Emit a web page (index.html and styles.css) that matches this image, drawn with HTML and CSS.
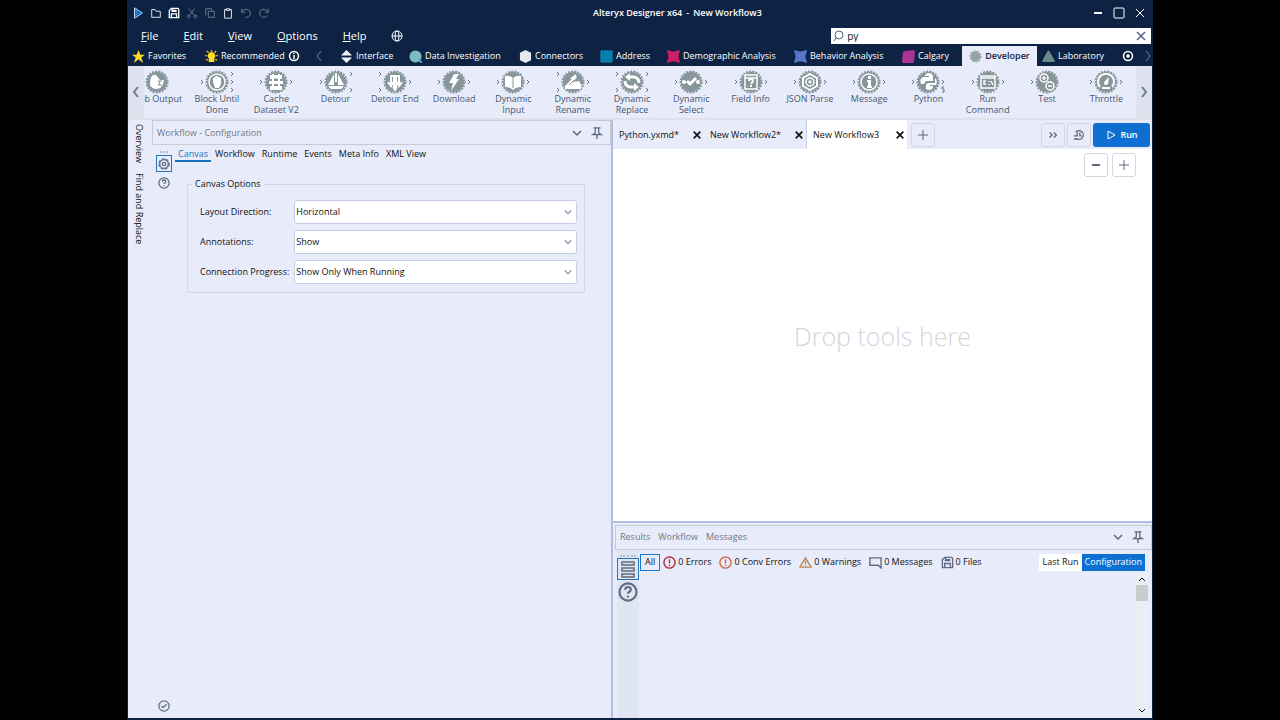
FILE: index.html
```html
<!DOCTYPE html>
<html lang="en">
<head>
    <meta charset="UTF-8">
    <meta name="viewport" content="width=device-width, initial-scale=1.0">
    <title>Alteryx Designer x64 - New Workflow3</title>
    <link rel="stylesheet" href="styles.css">
</head>
<body>
    <svg class="defs" width="0" height="0">
        <symbol id="gear" viewBox="0 0 40 26">
            <circle cx="20" cy="13" r="10" fill="#87969b"/>
            <circle cx="20" cy="13" r="10" fill="none" stroke="#87969b" stroke-width="3" stroke-dasharray="2 1"/>
        </symbol>
        <symbol id="close" viewBox="0 0 12 12"><path d="M2 2l8 8M10 2l-8 8"/></symbol>
        <symbol id="down" viewBox="0 0 12 12"><path d="M2 4l4 4 4-4"/></symbol>
        <symbol id="left" viewBox="0 0 12 12"><path d="M8 1L4 6l4 5"/></symbol>
        <symbol id="right" viewBox="0 0 12 12"><path d="M4 1l4 5-4 5"/></symbol>
        <symbol id="plus" viewBox="0 0 12 12"><path d="M6 1v10M1 6h10"/></symbol>
        <symbol id="pin" viewBox="0 0 12 14"><path d="M2 1h8M4 1v6L1 9h10L8 7V1M6 9v5"/></symbol>
        <symbol id="help" viewBox="0 0 14 14"><circle cx="7" cy="7" r="6"/><path d="M5 5.500q0-2 2-2t2 1.700q0 1-1 1.600-1 .6-1 1.500M7 9.600v1.200"/></symbol>
        <symbol id="alert" viewBox="0 0 14 14"><circle cx="7" cy="7" r="6"/><path d="M7 3.500v4.500M7 9.300v1.500"/></symbol>
        <symbol id="save" viewBox="0 0 14 14"><path d="M4 1.500h7.500l1 1v10h-11V4zM4 5h6M4 12V8h6v4M5 2v2h5"/></symbol>
        <symbol id="wavy" viewBox="0 0 14 14"><path d="M1 0q6 3 12 0l1 1q-3 6 0 12l-1 1q-6-3-12 0l-1-1q3-6 0-12z"/></symbol>
    </svg>

    <div class="app">
        <header class="titlebar">
            <div class="quick">
                <svg class="icon" viewBox="0 0 14 14"><path d="M3 1v12l9-6z" fill="#0b5fa5"/><path d="M3 1l9 6-9 6M4 4l3 3-3 3" stroke="#49b5f0"/></svg>
                <button aria-label="Open"><svg class="icon" viewBox="0 0 14 14"><path d="M2 3h4l1 2h5v7H2z"/></svg></button>
                <button aria-label="Save"><svg class="icon strong"><use href="#save"/></svg></button>
                <button class="dim" aria-label="Cut"><svg class="icon" viewBox="0 0 14 14"><path d="M3 2l7 8M10 2L4 10"/><circle cx="3" cy="11" r="1.500"/><circle cx="11" cy="11" r="1.500"/></svg></button>
                <button class="dim" aria-label="Copy"><svg class="icon" viewBox="0 0 14 14"><path d="M5 5h7v7H5zM3 9H2V2h7v2"/></svg></button>
                <button aria-label="Paste"><svg class="icon" viewBox="0 0 14 14"><path d="M5 3H3v10h8V3H9M5 2h4v2H5z"/></svg></button>
                <button class="dim" aria-label="Undo"><svg class="icon" viewBox="0 0 14 14"><path d="M2 2v4h4M2 6c3-5 10-4 10 1 0 4-3 5-6 5"/></svg></button>
                <button class="dim" aria-label="Redo"><svg class="icon" viewBox="0 0 14 14"><path d="M12 2v4H8M12 6C9 1 2 2 2 7s6 7 9 3"/></svg></button>
            </div>
            <div class="title"><span>Alteryx Designer x64</span><span>-</span><span>New Workflow3</span></div>
            <div class="window-buttons">
                <button aria-label="Minimize"><svg class="icon bold" viewBox="0 0 12 12"><path d="M2 6h8"/></svg></button>
                <button aria-label="Maximize"><svg class="icon" viewBox="0 0 12 12"><rect x="1" y="1" width="10" height="10" rx="1"/></svg></button>
                <button aria-label="Close"><svg class="icon"><use href="#close"/></svg></button>
            </div>
        </header>

        <div class="menu-row">
            <nav class="menu">
                <a href="#"><u>F</u>ile</a>
                <a href="#"><u>E</u>dit</a>
                <a href="#"><u>V</u>iew</a>
                <a href="#"><u>O</u>ptions</a>
                <a href="#"><u>H</u>elp</a>
                <a href="#" aria-label="Language"><svg class="icon" viewBox="0 0 12 12"><circle cx="6" cy="6" r="5"/><path d="M1 6h10"/><ellipse cx="6" cy="6" rx="2" ry="5"/></svg></a>
            </nav>
            <div class="search">
                <svg class="icon" viewBox="0 0 12 12"><circle cx="6" cy="5" r="4"/><path d="M3 8l-2 3"/></svg>
                <input type="text" value="py" aria-label="Search">
                <button aria-label="Clear search"><svg class="icon strong"><use href="#close"/></svg></button>
            </div>
        </div>

        <nav class="categories">
            <button><svg class="shape" viewBox="0 0 14 14"><path d="M7 0l2 5h5l-4 3 2 6-5-4-5 4 2-6-4-3h5z" fill="#fcdc25"/></svg>Favorites</button>
            <button><svg class="shape" viewBox="0 0 14 14"><path d="M4 9a4 4 0 1 1 6 0v4H4z" fill="#fcdc25"/><path d="M0 6h2M12 6h2M2 1l2 2M12 1l-2 2M1 11l2-1M13 11l-2-1M7 0v2" stroke="#fcaa25" stroke-width="1.500"/></svg>Recommended</button>
            <button aria-label="About recommendations"><svg class="icon strong" viewBox="0 0 12 12"><circle cx="6" cy="6" r="4.500"/><path d="M6 5v4M6 3v1"/></svg></button>
            <button class="dim" aria-label="Previous categories"><svg class="icon"><use href="#left"/></svg></button>
            <button><svg class="shape" viewBox="0 0 14 14"><path d="M7 0l6 6H1zM1 8h12l-6 6z" fill="#f0f1f4"/></svg>Interface</button>
            <button><svg class="shape" viewBox="0 0 14 14"><circle cx="7" cy="7" r="6.500" fill="#7dbdc0"/><path d="M10 10l4 4" stroke="#5fb0d2" stroke-width="2"/></svg>Data Investigation</button>
            <button><svg class="shape" viewBox="0 0 14 14"><path d="M7 0l6 3v8l-6 3-6-3V3z" fill="#e6e6ee"/></svg>Connectors</button>
            <button><svg class="shape" viewBox="0 0 14 14"><path d="M1 1h12v12H1z" fill="#087fac" stroke="#087fac" stroke-width="2" stroke-dasharray="2 1"/></svg>Address</button>
            <button><svg class="shape pink"><use href="#wavy"/></svg>Demographic Analysis</button>
            <button><svg class="shape blue"><use href="#wavy"/></svg>Behavior Analysis</button>
            <button><svg class="shape" viewBox="0 0 14 14"><path d="M1 2l2-1 10-1 1 2-1 10-1 2H1l-1-2z" fill="#a93494"/></svg>Calgary</button>
            <button class="current"><svg class="shape" viewBox="0 0 14 14"><circle cx="7" cy="7" r="5" fill="#93a3a8" stroke="#93a3a8" stroke-width="3" stroke-dasharray="2 1"/></svg>Developer</button>
            <button><svg class="shape" viewBox="0 0 14 14"><path d="M6 1q1-1 2 0l6 11-1 1H1l-1-1z" fill="#67898c"/></svg>Laboratory</button>
            <button aria-label="Add category"><svg class="icon strong" viewBox="0 0 12 12"><circle cx="6" cy="6" r="4.500"/><path d="M6 4v4M4 6h4"/></svg></button>
            <button class="dim" aria-label="More categories"><svg class="icon"><use href="#right"/></svg></button>
        </nav>

        <div class="palette">
            <button class="scroll" aria-label="Scroll left"><svg class="icon"><use href="#left"/></svg></button>
            <div class="tools-view">
                <div class="tools">
                    <button class="tool one-line"><svg viewBox="0 0 40 26"><use href="#gear"/><path class="fill" d="M14 8q2-3 5-2l4 5h4q-1 9-8 9-7-1-6-7z"/><path class="cut" d="M25 12h-4l2 2-2 2h4"/></svg>Blob Output</button>
                    <button class="tool"><svg viewBox="0 0 40 26"><use href="#gear"/><path class="port" d="M4 11l2 2-2 2M34 3l2 2-2 2M34 11l2 2-2 2M34 19l2 2-2 2"/><circle class="line thin" cx="20" cy="13" r="8"/><path class="fill" d="M16 13V9h1V8h1V7h3v1h2v1h1v6l-2 4h-4z"/></svg>Block Until Done</button>
                    <button class="tool"><svg viewBox="0 0 40 26"><use href="#gear"/><path class="port" d="M4 11l2 2-2 2M34 11l2 2-2 2"/><path class="fill" d="M14 6h12v4H14zM13 12h14v3H13zM14 17h12v4H14z"/><path class="line" d="M17 5v16M23 5v16"/><path class="cut" d="M18 10h4M18 16h4"/></svg>Cache Dataset V2</button>
                    <button class="tool"><svg viewBox="0 0 40 26"><use href="#gear"/><path class="port" d="M4 11l2 2-2 2M34 3l2 2-2 2M34 19l2 2-2 2"/><path class="fill" d="M19 4h2v9h-2zM18 5v11h-6zM22 5v11h6zM12 17h16l-3 3H15z"/></svg>Detour</button>
                    <button class="tool"><svg viewBox="0 0 40 26"><use href="#gear"/><path class="port" d="M4 3l2 2-2 2M4 19l2 2-2 2M34 11l2 2-2 2"/><path class="line" d="M16 16V7h3v12M24 16V7h-3v12M13 13l3 4 2-4M22 13l2 4 3-4M18 18l2 3 2-3"/></svg>Detour End</button>
                    <button class="tool"><svg viewBox="0 0 40 26"><use href="#gear"/><path class="port" d="M4 11l2 2-2 2M34 11l2 2-2 2"/><path class="fill" d="M20 5h5l-3 5h3l-8 12 2-8h-4z"/></svg>Download</button>
                    <button class="tool"><svg viewBox="0 0 40 26"><use href="#gear"/><path class="port" d="M4 11l2 2-2 2M34 11l2 2-2 2"/><path class="fill" d="M12 7q5-1 8 2 3-3 8-2v11q-5 0-8 3-3-3-8-3z"/><path class="cut" d="M20 9v10"/></svg>Dynamic Input</button>
                    <button class="tool"><svg viewBox="0 0 40 26"><use href="#gear"/><path class="port" d="M4 3l2 2-2 2M4 19l2 2-2 2M34 11l2 2-2 2"/><path class="fill" d="M12 17l10-10 2 1-4 5 6-1 3 5-3 2H12z"/><path class="line" d="M18 10l5-4M12 19h16"/><path class="cut" d="M16 16l5-5"/></svg>Dynamic Rename</button>
                    <button class="tool"><svg viewBox="0 0 40 26"><use href="#gear"/><path class="port" d="M4 3l2 2-2 2M4 19l2 2-2 2M34 3l2 2-2 2M34 19l2 2-2 2"/><path class="line thick" d="M17 8h5q5 1 5 6M23 18h-5q-5-1-5-6"/><path class="fill" d="M18 4v8l-5-4zM22 14v8l5-4z"/></svg>Dynamic Replace</button>
                    <button class="tool"><svg viewBox="0 0 40 26"><use href="#gear"/><path class="port" d="M4 11l2 2-2 2M34 11l2 2-2 2"/><circle class="fill" cx="13" cy="13" r="2"/><circle class="fill" cx="27" cy="13" r="2"/><path class="line thick" d="M16 12l3 3 6-6"/></svg>Dynamic Select</button>
                    <button class="tool"><svg viewBox="0 0 40 26"><use href="#gear"/><path class="port" d="M4 11l2 2-2 2M34 11l2 2-2 2"/><path class="line thin" d="M14 6h12v14H14zM14 9h12"/><path class="line" d="M18 12q0-2 2-2t2 2l-2 3M20 16v2"/></svg>Field Info</button>
                    <button class="tool"><svg viewBox="0 0 40 26"><use href="#gear"/><path class="port" d="M4 11l2 2-2 2M34 11l2 2-2 2"/><path class="line" d="M20 5l7 4v8l-7 4-7-4V9z"/><circle class="line thin" cx="20" cy="13" r="4"/><circle class="line thin" cx="20" cy="13" r="1"/></svg>JSON Parse</button>
                    <button class="tool"><svg viewBox="0 0 40 26"><use href="#gear"/><path class="port" d="M4 11l2 2-2 2M34 11l2 2-2 2"/><circle class="line thin" cx="20" cy="13" r="8"/><path class="fill" d="M19 7h3v3h-3zM18 11h4v6h1v2h-5v-2h1v-4h-1z"/></svg>Message</button>
                    <button class="tool"><svg viewBox="0 0 40 26"><use href="#gear"/><path class="port" d="M4 11l2 2-2 2M34 11l2 2-2 2M36 18h-2v2h2v3h-2"/><path class="fill" d="M17 6q1-2 4-2t4 3v5h-7l-2 3h-3q-2-5 2-7h6V7h-4zM27 9q3 3 1 7h-6v1h3q0 4-4 4t-3-3v-2l2-2h7z"/></svg>Python</button>
                    <button class="tool"><svg viewBox="0 0 40 26"><use href="#gear"/><path class="port" d="M4 11l2 2-2 2M34 11l2 2-2 2"/><path class="line thin" d="M13 7h14v12H13zM13 9h14M18 12h-2v3h2M21 12v1M21 15v1M23 12l2 4"/></svg>Run Command</button>
                    <button class="tool"><svg viewBox="0 0 40 26"><use href="#gear"/><path class="port" d="M4 11l2 2-2 2"/><circle class="line thin" cx="17" cy="9" r="4"/><circle class="line thin" cx="23" cy="17" r="4"/><path class="line thin" d="M17 7v4M15 9h4M21 17h4"/></svg>Test</button>
                    <button class="tool"><svg viewBox="0 0 40 26"><use href="#gear"/><path class="port" d="M4 11l2 2-2 2M34 11l2 2-2 2"/><path class="line" d="M14 18a8 8 0 1 1 12 0M16 19h8"/><path class="fill" d="M23 8l-1 7q-2 2-4 0 0-2 1-3z"/></svg>Throttle</button>
                </div>
            </div>
            <button class="scroll" aria-label="Scroll right"><svg class="icon"><use href="#right"/></svg></button>
        </div>

        <main class="workspace">
            <aside class="dock">
                <button>Overview</button>
                <button>Find and Replace</button>
            </aside>

            <section class="config">
                <div class="panel-head">
                    <h2>Workflow - Configuration</h2>
                    <button aria-label="Panel menu"><svg class="icon"><use href="#down"/></svg></button>
                    <button aria-label="Pin panel"><svg class="icon"><use href="#pin"/></svg></button>
                </div>
                <div class="config-body">
                    <div class="rail">
                        <span class="grip"></span>
                        <button class="selected" aria-label="Settings"><svg class="icon" viewBox="0 0 14 14"><circle cx="7" cy="7" r="5"/><circle cx="7" cy="7" r="6" stroke-dasharray="3 2"/><circle cx="7" cy="7" r="2"/></svg></button>
                        <button aria-label="Help"><svg class="icon"><use href="#help"/></svg></button>
                        <button class="last" aria-label="Validate"><svg class="icon" viewBox="0 0 14 14"><circle cx="7" cy="7" r="6"/><path d="M4 7l2 2 4-4"/></svg></button>
                    </div>
                    <div class="config-main">
                        <nav class="tabs">
                            <button class="selected">Canvas</button>
                            <button>Workflow</button>
                            <button>Runtime</button>
                            <button>Events</button>
                            <button>Meta Info</button>
                            <button>XML View</button>
                        </nav>
                        <fieldset>
                            <legend>Canvas Options</legend>
                            <label for="layout">Layout Direction:</label>
                            <div class="select">
                                <select id="layout"><option>Horizontal</option><option>Vertical</option></select>
                                <svg class="icon"><use href="#down"/></svg>
                            </div>
                            <label for="annotations">Annotations:</label>
                            <div class="select">
                                <select id="annotations"><option>Show</option><option>Hide</option></select>
                                <svg class="icon"><use href="#down"/></svg>
                            </div>
                            <label for="progress">Connection Progress:</label>
                            <div class="select">
                                <select id="progress"><option>Show Only When Running</option><option>Show</option><option>Hide</option></select>
                                <svg class="icon"><use href="#down"/></svg>
                            </div>
                        </fieldset>
                    </div>
                </div>
            </section>

            <div class="right">
                <div class="documents">
                    <div class="document">Python.yxmd*<button aria-label="Close Python.yxmd"><svg class="icon"><use href="#close"/></svg></button></div>
                    <div class="document">New Workflow2*<button aria-label="Close New Workflow2"><svg class="icon"><use href="#close"/></svg></button></div>
                    <div class="document open">New Workflow3<button aria-label="Close New Workflow3"><svg class="icon"><use href="#close"/></svg></button></div>
                    <button class="square" aria-label="New workflow"><svg class="icon"><use href="#plus"/></svg></button>
                    <div class="run-group">
                        <button class="square" aria-label="More tabs"><svg class="icon strong" viewBox="0 0 14 14"><path d="M3 4l3 3-3 3M8 4l3 3-3 3"/></svg></button>
                        <button class="square" aria-label="Schedule"><svg class="icon strong" viewBox="0 0 14 14"><path d="M3 4a5 5 0 1 1 1 7M1 8h4V4M8 4v4h2M1 12l4-1"/></svg></button>
                        <button class="run"><svg class="icon" viewBox="0 0 12 12"><path d="M3 2v8l7-4z"/></svg>Run</button>
                    </div>
                </div>
                <section class="canvas">
                    <div class="zoom">
                        <button class="square" aria-label="Zoom out"><svg class="icon bold" viewBox="0 0 12 12"><path d="M2 6h8"/></svg></button>
                        <button class="square" aria-label="Zoom in"><svg class="icon"><use href="#plus"/></svg></button>
                    </div>
                    <p>Drop tools here</p>
                </section>
                <section class="results">
                    <div class="panel-head">
                        <h2>Results</h2>
                        <h2>Workflow</h2>
                        <h2>Messages</h2>
                        <button aria-label="Results menu"><svg class="icon"><use href="#down"/></svg></button>
                        <button aria-label="Pin results"><svg class="icon"><use href="#pin"/></svg></button>
                    </div>
                    <div class="results-body">
                        <div class="rail wide">
                            <span class="grip"></span>
                            <button class="selected" aria-label="Messages list"><svg class="icon" viewBox="0 0 20 20"><path d="M4 3h12v3H4zM4 9h12v3H4zM4 15h12v3H4z"/></svg></button>
                            <button aria-label="Results help"><svg class="icon"><use href="#help"/></svg></button>
                        </div>
                        <div class="results-main">
                            <div class="filters">
                                <button class="all">All</button>
                                <button><svg class="icon red"><use href="#alert"/></svg>0 Errors</button>
                                <button><svg class="icon orange"><use href="#alert"/></svg>0 Conv Errors</button>
                                <button><svg class="icon amber" viewBox="0 0 14 14"><path d="M7 2l6 10H1zM7 5v4M7 10v1"/></svg>0 Warnings</button>
                                <button><svg class="icon" viewBox="0 0 14 14"><path d="M1 2h12v11l-3-3H1z"/></svg>0 Messages</button>
                                <button><svg class="icon"><use href="#save"/></svg>0 Files</button>
                                <div class="switch">
                                    <button>Last Run</button>
                                    <button class="selected">Configuration</button>
                                </div>
                            </div>
                            <div class="scrollbar">
                                <svg class="icon" viewBox="0 0 12 12"><path d="M3 8l3-3 3 3"/></svg>
                                <span class="thumb"></span>
                                <svg class="icon" viewBox="0 0 12 12"><path d="M3 5l3 3 3-3"/></svg>
                            </div>
                        </div>
                    </div>
                </section>
            </div>
        </main>
    </div>
</body>
</html>
```

FILE: styles.css
```css
* {
    box-sizing: border-box;
}
body {
    margin: 0;
    padding: 0 127px;
    background: #000;
    font-family: 'Open Sans', 'Noto Sans', sans-serif;
    font-size: 9px;
    line-height: 12px;
    color: #111;
}
button, input, select {
    font: inherit;
    color: inherit;
    background: none;
    border: none;
    padding: 0;
    margin: 0;
}
button {
    display: flex;
    align-items: center;
    justify-content: center;
    white-space: nowrap;
    cursor: pointer;
}
h2, p {
    margin: 0;
    font-weight: normal;
}
.defs {
    position: absolute;
}
.icon {
    display: block;
    flex: none;
    width: 12px;
    height: 12px;
    fill: none;
    stroke: currentColor;
    stroke-width: 1;
}
.strong {
    stroke-width: 1.5;
}
.bold {
    stroke-width: 2;
}
.app {
    display: flex;
    flex-direction: column;
    height: 100vh;
    background: #e8ecfa;
    border: 1px solid #0e2344;
    border-top: none;
    border-bottom-width: 2px;
}

/* title bar and menu */
.titlebar, .menu-row, .categories {
    background: #0e2344;
    color: #fff;
}
.titlebar {
    display: grid;
    grid-template-columns: 6fr auto 5fr;
    align-items: center;
    height: 26px;
    padding: 0 6px 0 4px;
}
.quick, .window-buttons, .title {
    display: flex;
    align-items: center;
}
.quick {
    gap: 6px;
}
.dim {
    color: #78849a;
}
.title {
    gap: 4px;
    font-weight: 600;
}
.window-buttons {
    justify-content: flex-end;
    gap: 9px;
}
.menu-row {
    display: flex;
    align-items: center;
    height: 20px;
    padding-right: 1px;
}
.menu {
    display: flex;
    align-items: center;
    flex: 11;
    gap: 25px;
    padding-left: 13px;
    font-size: 11px;
}
.menu a {
    color: #fff;
    text-decoration: none;
}
.search {
    display: flex;
    align-items: center;
    flex: 5;
    height: 16px;
    padding: 0 4px 0 2px;
    background: #fff;
    color: #526080;
}
.search input {
    flex: 1;
    min-width: 0;
    padding-left: 2px;
    font-size: 10px;
    color: #111;
}

/* tool categories */
.categories {
    display: grid;
    grid-template-columns: 73fr 83fr 25fr 27fr 69fr 110fr 81fr 67fr 127fr 108fr 60fr 75fr 85fr 20fr 10fr;
    height: 20px;
    padding-left: 4px;
}
.categories button {
    justify-content: flex-start;
    gap: 3px;
    min-width: 0;
}
.shape {
    flex: none;
    width: 13px;
    height: 13px;
}
.pink {
    fill: #cc2065;
}
.blue {
    fill: #5875c8;
}
.categories .current {
    justify-content: center;
    background: #e8ecfa;
    color: #0e2344;
    font-weight: 600;
}
.categories .current + button {
    padding-left: 5px;
}

/* tool palette */
.palette {
    display: flex;
    height: 54px;
    border-bottom: 2px solid #dfe2ea;
}
.scroll {
    width: 16px;
    flex: none;
    background: #dde2ee;
    color: #6c7a92;
}
.palette .icon {
    stroke-width: 2;
}
.tools-view {
    flex: 1;
    overflow: hidden;
}
.tools {
    display: grid;
    grid-template-columns: repeat(17, 1fr);
    margin-left: -18px;
    padding-top: 3px;
}
.tool {
    flex-direction: column;
    justify-content: flex-start;
    padding: 0 5px;
    white-space: normal;
    line-height: 11px;
    color: #47566e;
}
.one-line {
    white-space: nowrap;
}
.tool svg {
    width: 40px;
    height: 26px;
    flex: none;
    margin-bottom: -2px;
}
.port, .line, .cut {
    fill: none;
    stroke: #66748a;
}
.line {
    stroke: #fff;
    stroke-width: 2;
}
.thin {
    stroke-width: 1.5;
}
.thick {
    stroke-width: 3;
}
.cut {
    stroke: #87969b;
}
.fill {
    fill: #fff;
}

/* side dock */
.workspace {
    display: grid;
    grid-template-columns: 24px 459fr 541fr;
    flex: 1;
    min-height: 0;
}
.dock {
    display: flex;
    flex-direction: column;
    gap: 10px;
    padding: 4px 3px 0 0;
}
.dock button {
    align-self: center;
    writing-mode: vertical-rl;
}

/* panels */
.panel-head {
    display: flex;
    align-items: center;
    gap: 8px;
    height: 25px;
    padding: 0 7px 0 4px;
    border: 1px solid #c7cad3;
    color: #737782;
}
.panel-head h2 {
    font-size: 9px;
}
.panel-head button:nth-last-child(2) {
    margin-left: auto;
}
.panel-head .icon {
    color: #5c6880;
    stroke-width: 1.5;
}
.config {
    display: flex;
    flex-direction: column;
}
.config-body {
    display: flex;
    flex: 1;
}
.rail {
    display: flex;
    flex-direction: column;
    align-items: center;
    gap: 2px;
    width: 23px;
    padding: 6px 0;
    color: #606b81;
}
.rail button {
    width: 16px;
    height: 17px;
}
.rail .icon {
    stroke-width: 1.5;
}
.rail .selected {
    border: 1px solid #2876b8;
}
.rail .last {
    margin-top: auto;
    height: 12px;
}
.grip {
    width: 8px;
    border-top: 2px dotted #b3bac8;
}
.config-main {
    flex: 1;
    padding-right: 26px;
}
.tabs {
    display: flex;
    gap: 1px;
    padding-top: 2px;
}
.tabs button {
    height: 15px;
    padding: 0 3px;
    border-bottom: 2px solid transparent;
}
.tabs .selected {
    color: #1673b8;
    border-color: #1673b8;
}
fieldset {
    display: grid;
    grid-template-columns: auto 1fr;
    align-items: center;
    gap: 6px 5px;
    margin: 16px 0 0 12px;
    padding: 10px 7px 8px 12px;
    border: 1px solid #d3d8dd;
}
legend {
    margin-left: -8px;
    padding: 0 3px;
}
.select {
    display: grid;
    align-items: center;
}
.select select, .select .icon {
    grid-area: 1 / 1;
}
.select select {
    appearance: none;
    width: 100%;
    height: 24px;
    padding-left: 1px;
    background: #fff;
    border: 1px solid #c5cee2;
    border-radius: 3px;
}
.select .icon {
    width: 10px;
    justify-self: end;
    margin-right: 4px;
    color: #8390ac;
    stroke-width: 1.5;
    pointer-events: none;
}

/* open documents */
.right {
    display: flex;
    flex-direction: column;
    min-width: 0;
    border-left: 2px solid #b0bfe1;
}
.documents {
    display: flex;
    align-items: center;
    height: 29px;
}
.document {
    display: flex;
    align-items: center;
    justify-content: space-between;
    gap: 13px;
    height: 100%;
    padding: 0 2px 0 6px;
    white-space: nowrap;
}
.document .icon {
    width: 10px;
    height: 10px;
    stroke-width: 2;
}
.open {
    gap: 16px;
    background: #fff;
    border-left: 1px solid #c5cee2;
}
.square {
    width: 24px;
    height: 24px;
    border: 1px solid #d0d6e4;
    border-radius: 3px;
    color: #5c6880;
}
.documents > .square {
    margin-left: 4px;
}
.run-group {
    display: flex;
    gap: 2px;
    margin-left: auto;
    padding-right: 2px;
}
.run {
    gap: 3px;
    width: 57px;
    height: 24px;
    border-radius: 3px;
    background: #0c6fd1;
    color: #fff;
    font-weight: 600;
}
.canvas {
    display: flex;
    flex-direction: column;
    flex: 1;
    background: #fff;
}
.zoom {
    display: flex;
    justify-content: flex-end;
    gap: 4px;
    padding: 4px 16px 0 0;
}
.canvas p {
    margin: auto;
    padding-bottom: 25px;
    font-size: 25px;
    line-height: 36px;
    font-weight: 300;
    color: #d3d6de;
}

/* results */
.results {
    display: flex;
    flex-direction: column;
    height: 33%;
    border-top: 2px solid #b0bfe1;
    padding: 2px 0 0 2px;
}
.results-body {
    display: flex;
    flex: 1;
}
.wide {
    gap: 1px;
    width: 22px;
    margin-left: 2px;
    padding-top: 5px;
    background: #dfe5f1;
}
.wide .grip {
    width: 16px;
}
.wide button {
    width: 22px;
    height: 22px;
}
.wide .icon {
    width: 20px;
    height: 20px;
}
.results-main {
    display: flex;
    flex-direction: column;
    flex: 1;
}
.filters {
    display: flex;
    align-items: center;
    gap: 3px;
    padding: 4px 7px 0 1px;
}
.filters button {
    gap: 2px;
    height: 17px;
}
.filters > button + button + button {
    margin-left: 5px;
}
.filters .icon {
    width: 13px;
    height: 13px;
    color: #606b81;
    stroke-width: 1.5;
}
.filters .all {
    padding: 0 4px;
    border: 1px solid #147bd1;
}
.filters .red {
    color: #b52a3c;
}
.filters .orange {
    color: #d2694c;
}
.filters .amber {
    color: #b9895a;
}
.switch {
    display: flex;
    margin-left: auto;
    background: #fff;
}
.switch button {
    padding: 0 3px;
}
.switch .selected {
    background: #0c6fd1;
    color: #fff;
}
.scrollbar {
    display: flex;
    flex-direction: column;
    align-self: flex-end;
    flex: 1;
    width: 12px;
    margin: 2px 4px 2px 0;
    background: #eceef4;
}
.thumb {
    height: 16px;
    margin-bottom: auto;
    background: #c9cccf;
}
```
